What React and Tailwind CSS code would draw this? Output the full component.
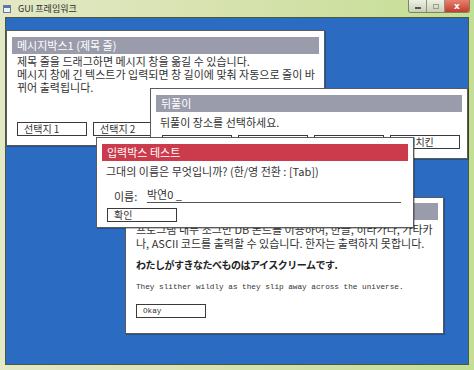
import React from "react";

const KR = "font-['Noto_Sans_CJK_KR',sans-serif]";

function Btn({ children, className = "" }) {
    return (
        <div
            className={`h-[14px] w-[70px] shrink-0 border border-[#3a3a3a] bg-white pl-[6px] text-[10px] leading-[12px] text-[#333] ${KR} ${className}`}
        >
            {children}
        </div>
    );
}

function Dialog({ pos, title, bar, top = "pt-[6px]", children }) {
    return (
        <div
            className={`absolute flex flex-col border border-[#5a5a5a] bg-white px-[5px] shadow-[1px_1px_0_rgba(0,0,0,0.25)] ${top} ${pos}`}
        >
            <div
                className={`h-[17px] shrink-0 pl-[5px] text-[11px] leading-[17px] text-white ${KR} ${bar}`}
            >
                {title}
            </div>
            {children}
        </div>
    );
}

export default function App() {
    return (
        <div className="relative h-[370px] w-[474px] overflow-hidden bg-gradient-to-r from-[#e3e8c6] via-[#d6e2ad] to-[#c4de94]">
            {/* frame title bar */}
            <div className="flex h-[17px] items-center pl-[3px]">
                <div className="h-[8px] w-[8px] border border-[#6b7a8c] bg-[#eef2f6]">
                    <div className="h-[2px] bg-[#4a78b8]" />
                </div>
                <span className={`ml-[7px] text-[9px] text-[#2a2a2a] ${KR}`}>
                    GUI 프레임워크
                </span>
                {/* window controls */}
                <div className="absolute right-[4px] top-0 flex h-[13px] overflow-hidden rounded-b-[3px] border border-t-0 border-[#7a8466]">
                    <div className="flex w-[18px] items-center justify-center border-r border-[#8c9478] bg-gradient-to-b from-[#eef1e2] to-[#c8cfb6]">
                        <div className="mt-[3px] h-[2px] w-[6px] bg-[#555]" />
                    </div>
                    <div className="flex w-[18px] items-center justify-center border-r border-[#8c9478] bg-gradient-to-b from-[#eef1e2] to-[#c8cfb6]">
                        <div className="h-[5px] w-[6px] border border-[#9aa08c]" />
                    </div>
                    <div className="flex w-[24px] items-center justify-center bg-gradient-to-b from-[#e8806f] to-[#c23a2a] text-[9px] font-bold leading-none text-white font-['DejaVu_Sans',sans-serif]">
                        x
                    </div>
                </div>
            </div>

            {/* client area */}
            <div className="relative mx-[5px] h-[348px] border border-[#4a5a3a] bg-[#2b6bc2]">
                {/* window 1 */}
                <Dialog
                    pos="left-[0px] top-[12px] h-[116px] w-[319px]"
                    title="메시지박스1 (제목 줄)"
                    bar="bg-[#9a9cab]"
                >
                    <div className={`mt-[1px] pl-[5px] text-[11px] leading-[13px] text-[#333] ${KR}`}>
                        <p>제목 줄을 드래그하면 메시지 창을 옮길 수 있습니다.</p>
                        <p>메시지 창에 긴 텍스트가 입력되면 창 길이에 맞춰 자동으로 줄이 바</p>
                        <p>뀌어 출력됩니다.</p>
                    </div>
                    <div className="mt-auto mb-[9px] flex gap-[6px] pl-[5px]">
                        <Btn>선택지 1</Btn>
                        <Btn>선택지 2</Btn>
                    </div>
                </Dialog>

                {/* window 2 */}
                <Dialog
                    pos="left-[144px] top-[70px] h-[71px] w-[318px]"
                    title="뒤풀이"
                    bar="bg-[#9a9cab]"
                >
                    <p className={`mt-[4px] pl-[4px] text-[11px] leading-[13px] text-[#333] ${KR}`}>
                        뒤풀이 장소를 선택하세요.
                    </p>
                    <div className="mt-[6px] flex gap-[6px] pl-[6px]">
                        <Btn className="w-[69px]">삼겹살</Btn>
                        <Btn className="w-[69px]">닭갈비</Btn>
                        <Btn className="w-[69px]">족발</Btn>
                        <Btn className="w-[69px]">양념치킨</Btn>
                    </div>
                </Dialog>

                {/* window 4 */}
                <Dialog
                    pos="left-[119px] top-[179px] h-[137px] w-[319px]"
                    title="출력 테스트"
                    bar="bg-[#9a9cab]"
                    top="pt-[5px]"
                >
                    <div className={`mt-[2px] pl-[5px] text-[11px] leading-[14px] text-[#333] ${KR}`}>
                        <p>프로그램 내부 조그만 DB 폰트를 이용하여, 한글, 히라가나, 가타카</p>
                        <p>나, ASCII 코드를 출력할 수 있습니다. 한자는 출력하지 못합니다.</p>
                    </div>
                    <p className="mt-[8px] pl-[5px] text-[10px] font-bold leading-[14px] tracking-[-0.5px] text-[#222] font-['Noto_Sans_CJK_JP',serif]">
                        わたしがすきなたべものはアイスクリームです.
                    </p>
                    <p className="mt-[9px] pl-[5px] text-[7.7px] leading-[12px] text-[#333] font-['Liberation_Mono',monospace]">
                        They slither wildly as they slip away across the universe.
                    </p>
                    <div className="mt-[11px] pl-[5px]">
                        <div className="h-[14px] w-[70px] border border-[#3a3a3a] pl-[6px] text-[7.7px] leading-[12px] text-[#333] font-['Liberation_Mono',monospace]">
                            Okay
                        </div>
                    </div>
                </Dialog>

                {/* window 3 */}
                <Dialog
                    pos="left-[90px] top-[119px] h-[91px] w-[318px]"
                    title="입력박스 테스트"
                    bar="bg-[#cc3b4c]"
                >
                    <p className={`mt-[3px] pl-[4px] text-[11px] leading-[14px] text-[#333] ${KR}`}>
                        그대의 이름은 무엇입니까? (한/영 전환 : [Tab])
                    </p>
                    <div className={`mt-[9px] flex items-end text-[11px] leading-[14px] text-[#333] ${KR}`}>
                        <span className="w-[45px] shrink-0 pl-[12px]">이름:</span>
                        <span className="mr-[7px] flex-1 border-b border-[#555] pb-[1px]">박연0 _</span>
                    </div>
                    <div className="mt-[5px] pl-[5px]">
                        <Btn>확인</Btn>
                    </div>
                </Dialog>
            </div>
        </div>
    );
}
